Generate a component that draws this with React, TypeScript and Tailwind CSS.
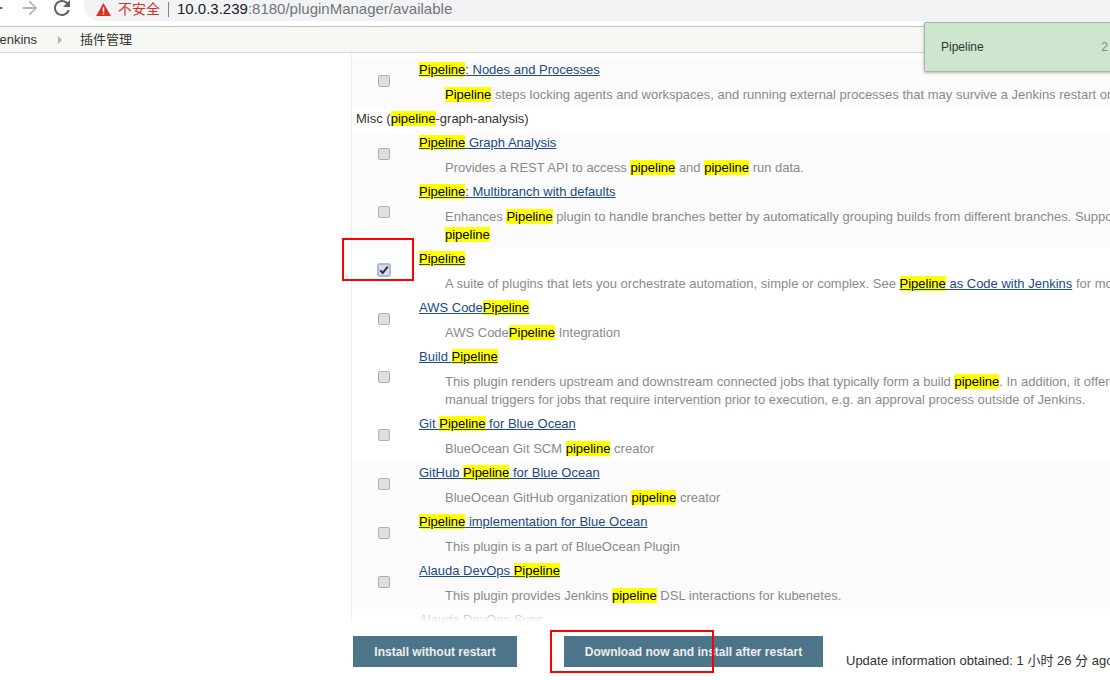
import type { ReactNode } from "react";

const cjk = "font-['Liberation_Sans','Noto_Sans_CJK_SC',sans-serif]";

function Hl({ children }: { children: ReactNode }) {
  return <span className="bg-[#ffff00] text-black">{children}</span>;
}

function Checkbox({ checked }: { checked?: boolean }) {
  return (
    <div
      className={
        checked
          ? "flex h-[14px] w-[14px] items-center justify-center rounded-[3px] border-2 border-[#9dbcf0] bg-[#dcdcdc]"
          : "h-[12px] w-[12px] rounded-[2px] border border-[#b0b0b0] bg-[#dedede]"
      }
    >
      {checked && (
        <svg viewBox="0 0 12 12" className="h-[10px] w-[10px]">
          <path d="M1.5 6.5 L4.5 9.5 L10.5 2" fill="none" stroke="#333" strokeWidth="2.4" />
        </svg>
      )}
    </div>
  );
}

function Row({
  title,
  children,
  checked,
  white,
}: {
  title: ReactNode;
  children: ReactNode;
  checked?: boolean;
  white?: boolean;
}) {
  return (
    <div className={white ? "flex bg-white" : "flex bg-[#fbfbfb]"}>
      <div className="flex w-[67px] shrink-0 items-center justify-center pr-[3px] pb-[6px]">
        <Checkbox checked={checked} />
      </div>
      <div className="w-[800px] shrink-0">
        <div className="h-[22px] pt-[2px] leading-[18px] whitespace-nowrap">
          <a className="text-[#204a87] underline">{title}</a>
        </div>
        <div className="w-[700px] pt-[5px] pb-[4px] pl-[26px] leading-[18px] text-[#8a8a8a]">{children}</div>
      </div>
    </div>
  );
}

export default function App() {
  return (
    <div className={`relative flex h-[680px] w-[1110px] flex-col overflow-hidden bg-white text-[13px] ${cjk}`}>
      {/* browser toolbar */}
      <div className="flex h-[27px] shrink-0 items-start border-b border-[#c4c4c4] bg-white">
        <svg viewBox="0 0 24 24" className="mt-[-3px] ml-[-16px] h-[22px] w-[22px]" fill="#5f6368">
          <path d="M20 11H7.83l5.59-5.59L12 4l-8 8 8 8 1.41-1.41L7.83 13H20v-2z" />
        </svg>
        <svg viewBox="0 0 24 24" className="mt-[-3px] ml-[13px] h-[22px] w-[22px]" fill="#b4b6b8">
          <path d="M12 4l-1.41 1.41L16.17 11H4v2h12.17l-5.58 5.59L12 20l8-8z" />
        </svg>
        <svg viewBox="0 0 24 24" className="mt-[-4px] ml-[9px] h-[24px] w-[24px]" fill="#5f6368">
          <path d="M17.65 6.35C16.2 4.9 14.21 4 12 4c-4.42 0-7.99 3.58-7.99 8s3.57 8 7.99 8c3.73 0 6.84-2.55 7.73-6h-2.08c-.82 2.33-3.04 4-5.65 4-3.31 0-6-2.69-6-6s2.69-6 6-6c1.66 0 3.14.69 4.22 1.78L13 11h7V4l-2.35 2.35z" />
        </svg>
        <div className="mt-[-10px] ml-[10px] flex h-[31px] flex-1 items-center rounded-l-full bg-[#f1f3f4] pt-[7px] pl-[12px]">
          <svg viewBox="0 0 16 14" className="h-[13px] w-[15px]">
            <path d="M8 0 L16 14 L0 14 Z" fill="#d93025" />
            <rect x="7.2" y="4.5" width="1.6" height="5" fill="#fff" />
            <rect x="7.2" y="10.6" width="1.6" height="1.6" fill="#fff" />
          </svg>
          <span className="ml-[7px] text-[14px] text-[#d93025]">不安全</span>
          <span className="mx-[8px] h-[15px] w-px bg-[#80868b]" />
          <span className="text-[15px] text-[#202124]">10.0.3.239</span>
          <span className="text-[15px] text-[#70757a]">:8180/pluginManager/available</span>
        </div>
      </div>

      {/* breadcrumbs */}
      <div className="flex h-[26px] shrink-0 items-center border-b border-[#d3d7cf] bg-[#f6f9f3] text-[#333]">
        <span className="ml-[-7px]">Jenkins</span>
        <span className="ml-[21px] h-0 w-0 border-y-[4px] border-l-[4px] border-y-transparent border-l-[#b0b0b0]" />
        <span className="ml-[18px]">插件管理</span>
      </div>

      {/* plugin table */}
      <div className="flex min-h-0 flex-1">
        <div className="w-[351px] shrink-0" />
        <div className="min-w-0 flex-1 overflow-hidden">
          <div className="relative flex h-[569px] flex-col overflow-hidden border-l border-[#eeeeee] pt-[6px]">
            <Row
              title={
                <>
                  <Hl>Pipeline</Hl>: Nodes and Processes
                </>
              }
            >
              <div className="whitespace-nowrap">
                <Hl>Pipeline</Hl> steps locking agents and workspaces, and running external processes that may survive a
                Jenkins restart or slave reconnection.
              </div>
            </Row>
            <div className="h-[24px] shrink-0 pl-[4px] leading-[22px] text-[#333]">
              Misc (<Hl>pipeline</Hl>-graph-analysis)
            </div>
            <Row
              title={
                <>
                  <Hl>Pipeline</Hl> Graph Analysis
                </>
              }
            >
              Provides a REST API to access <Hl>pipeline</Hl> and <Hl>pipeline</Hl> run data.
            </Row>
            <Row
              title={
                <>
                  <Hl>Pipeline</Hl>: Multibranch with defaults
                </>
              }
            >
              <div className="whitespace-nowrap">
                Enhances <Hl>Pipeline</Hl> plugin to handle branches better by automatically grouping builds from different
                branches. Supports
              </div>
              <Hl>pipeline</Hl>
            </Row>
            <Row white checked title={<Hl>Pipeline</Hl>}>
              <div className="whitespace-nowrap">
                A suite of plugins that lets you orchestrate automation, simple or complex. See{" "}
                <a className="text-[#204a87] underline">
                  <Hl>Pipeline</Hl> as Code with Jenkins
                </a>{" "}
                for more details.
              </div>
            </Row>
            <Row
              white
              title={
                <>
                  AWS Code<Hl>Pipeline</Hl>
                </>
              }
            >
              AWS Code<Hl>Pipeline</Hl> Integration
            </Row>
            <Row
              white
              title={
                <>
                  Build <Hl>Pipeline</Hl>
                </>
              }
            >
              <div className="whitespace-nowrap">
                This plugin renders upstream and downstream connected jobs that typically form a build <Hl>pipeline</Hl>. In
                addition, it offers the ability to define
              </div>
              <div className="whitespace-nowrap">
                manual triggers for jobs that require intervention prior to execution, e.g. an approval process outside of
                Jenkins.
              </div>
            </Row>
            <Row
              white
              title={
                <>
                  Git <Hl>Pipeline</Hl> for Blue Ocean
                </>
              }
            >
              BlueOcean Git SCM <Hl>pipeline</Hl> creator
            </Row>
            <Row
              title={
                <>
                  GitHub <Hl>Pipeline</Hl> for Blue Ocean
                </>
              }
            >
              BlueOcean GitHub organization <Hl>pipeline</Hl> creator
            </Row>
            <Row
              title={
                <>
                  <Hl>Pipeline</Hl> implementation for Blue Ocean
                </>
              }
            >
              This plugin is a part of BlueOcean Plugin
            </Row>
            <Row
              title={
                <>
                  Alauda DevOps <Hl>Pipeline</Hl>
                </>
              }
            >
              This plugin provides Jenkins <Hl>pipeline</Hl> DSL interactions for kubenetes.
            </Row>
            <Row white title="Alauda DevOps Sync">
              Alauda
            </Row>
            <div className="absolute right-0 bottom-0 left-0 h-[16px] bg-gradient-to-b from-white/30 to-white" />
          </div>

          {/* save bar */}
          <div className="flex items-start pt-[14px] pl-[2px]">
            <button className="h-[31px] w-[164px] shrink-0 bg-[#4d758a] text-[12px] font-bold text-[#eeeeee]">
              Install without restart
            </button>
            <button className="ml-[47px] h-[31px] w-[259px] shrink-0 bg-[#4d758a] text-[12px] font-bold text-[#eeeeee]">
              Download now and install after restart
            </button>
            <span className="mt-[15px] ml-[23px] whitespace-nowrap text-[#333]">Update information obtained: 1 小时 26 分 ago</span>
          </div>
        </div>
      </div>

      {/* notification */}
      <div className="absolute top-[22px] left-[924px] flex h-[50px] w-[200px] items-center justify-between rounded-[2px] border border-[#b0b0b0] bg-[#cde6cd] pl-[16px] text-[12px] text-[#333] shadow-[0_1px_3px_rgba(0,0,0,0.3)]">
        <span>Pipeline</span>
        <span className="mr-[15px] text-[#888]">2</span>
      </div>

      {/* screenshot annotations */}
      <div className="absolute top-[238px] left-[342px] h-[43px] w-[72px] border-2 border-[#ff0000]" />
      <div className="absolute top-[630px] left-[550px] h-[43px] w-[164px] border-2 border-[#ff0000]" />
    </div>
  );
}
